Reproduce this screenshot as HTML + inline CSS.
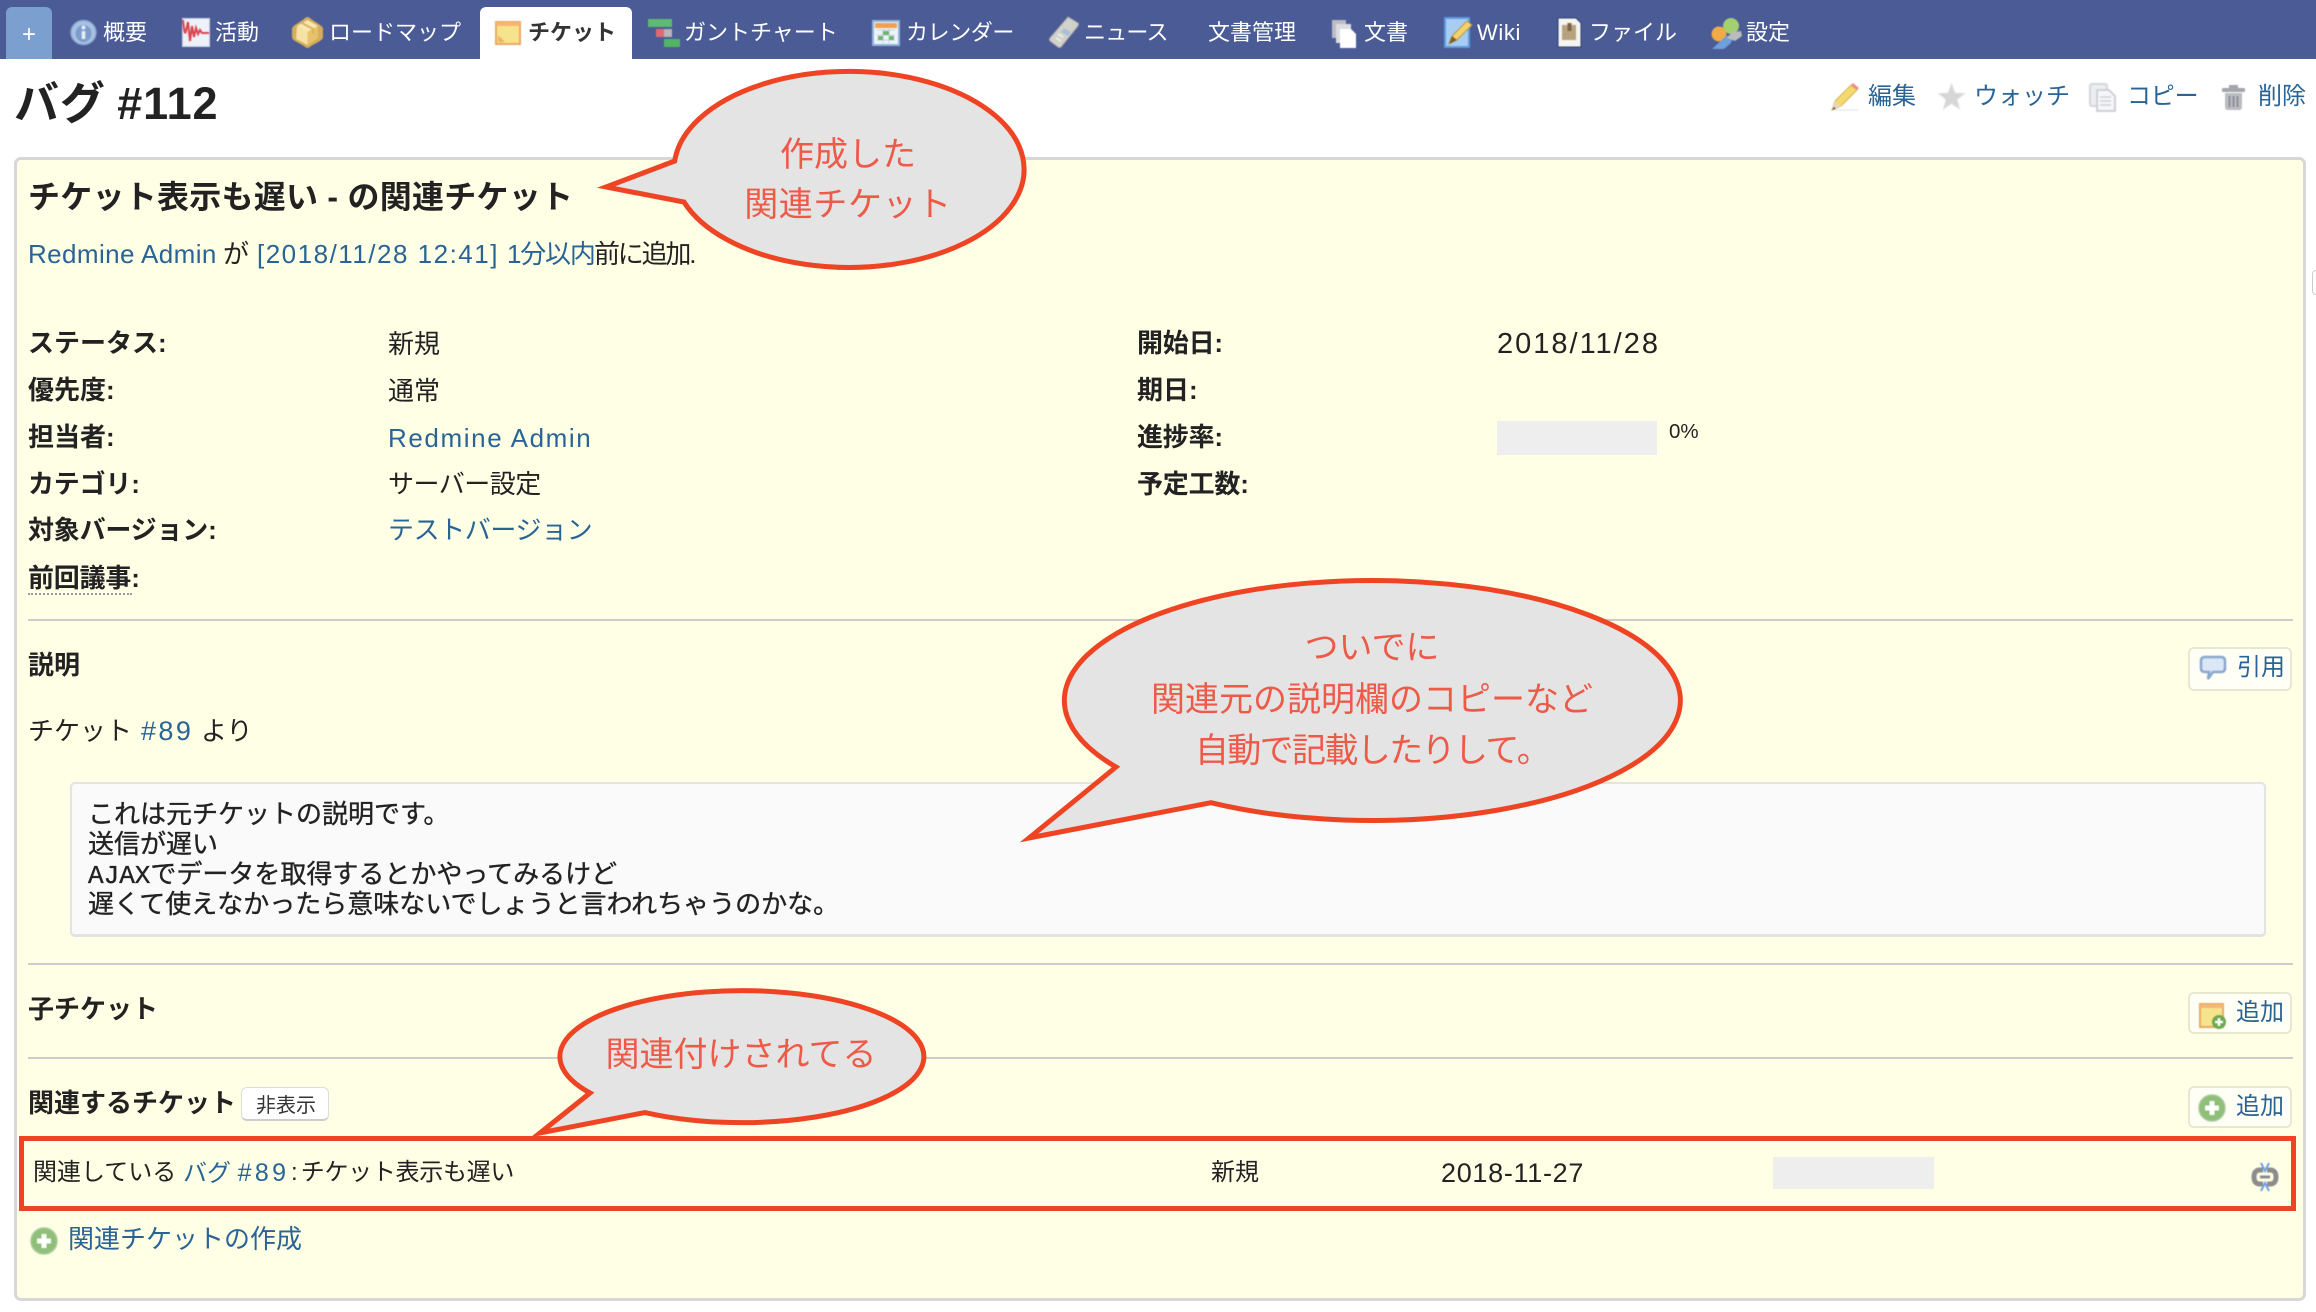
<!DOCTYPE html>
<html lang="ja">
<head>
<meta charset="utf-8">
<title>バグ #112</title>
<style>
html,body{margin:0;padding:0;background:#fff}
body{position:relative;width:2316px;height:1312px;overflow:hidden;font-family:"Liberation Sans","Noto Sans CJK JP",sans-serif;color:#222;font-size:26px}
.t{position:absolute;white-space:nowrap;line-height:40px;height:40px}
.n{font-size:22px;color:#fff;top:13px}
.b{font-weight:bold}
a,.l{color:#2a6496;text-decoration:none}
.a{font-size:24px;color:#2a6496;top:77px}
svg.i{position:absolute;overflow:visible;filter:blur(.5px)}
.hr{position:absolute;left:28px;width:2265px;height:2px;background:#ccc}
.btn{position:absolute;left:2188px;width:104px;box-sizing:border-box;border:2px solid #e8e8d0;border-radius:6px;background:#fffff6}
.m{font-family:"Liberation Mono","Noto Sans CJK JP",monospace;line-height:30px;height:30px;left:88px;color:#222;-webkit-text-stroke:.35px #222}
</style>
</head>
<body>
<!-- nav -->
<div style="position:absolute;left:0;top:0;width:2316px;height:59px;background:#4a5b96"></div>
<div style="position:absolute;left:6px;top:7px;width:46px;height:52px;background:#7b9fcf;border-radius:6px 6px 0 0"></div>
<div class="t n" style="left:22px;top:15px;font-size:24px">+</div>
<div style="position:absolute;left:480px;top:7px;width:152px;height:52px;background:#fff;border-radius:6px 6px 0 0"></div>

<svg class="i" style="left:70px;top:20px" width="27" height="25" viewBox="0 0 27 25"><ellipse cx="13.5" cy="12.500" rx="12.500" ry="12" fill="#a9c2e2" stroke="#8ba7cf" stroke-width="1.500"/><ellipse cx="13.500" cy="13.500" rx="8" ry="8.500" fill="#7c9dca"/><rect x="11.700" y="11" width="3.600" height="8" fill="#e8eef8"/><circle cx="13.500" cy="7.500" r="2" fill="#e8eef8"/></svg>
<div class="t n" style="left:103px">概要</div>
<svg class="i" style="left:182px;top:18px" width="28" height="29" viewBox="0 0 28 29"><rect x="0.500" y="0.500" width="27" height="28" fill="#eef1f7" stroke="#c9d2e4"/><path d="M1 2C2 12 3 18 4 13L6 4L8 23L10 8L12 19L14 10L16 16L18 12L20 15H27" fill="none" stroke="#dc4550" stroke-width="2"/></svg>
<div class="t n" style="left:215px">活動</div>
<svg class="i" style="left:292px;top:17px" width="31" height="31" viewBox="0 0 31 31"><path d="M15.500 0Q17 0 19 2L28 8Q31 10 31 12V20Q31 22 28 24L19 29Q17 31 15.500 31Q14 31 12 29L3 24Q0 22 0 20V12Q0 10 3 8L12 2Q14 0 15.500 0Z" fill="#d5ae5c"/><path d="M15.500 3L26 9L15.500 15L5 9Z" fill="#f8e8b4"/><path d="M5 9L15.500 15V28L4 22Z" fill="#f6e2a4"/><path d="M15.500 15L26 9V21L15.500 28Z" fill="#e8c26a"/><path d="M10 6L21 12V17" stroke="#d9b45c" stroke-width="2" fill="none"/></svg>
<div class="t n" style="left:329px">ロードマップ</div>
<svg class="i" style="left:495px;top:21px" width="26" height="24" viewBox="0 0 26 24"><rect x="1" y="1" width="24" height="22" fill="#f6e48c" stroke="#eaa763" stroke-width="2"/><rect x="1" y="1" width="24" height="4" fill="#f2b872"/><path d="M3 21L10 21L3 14Z" fill="#eeb169"/></svg>
<div class="t n b" style="left:528px;color:#333">チケット</div>
<svg class="i" style="left:648px;top:19px" width="32" height="28" viewBox="0 0 32 28"><rect x="0" y="0" width="24" height="8" fill="#5fba72"/><rect x="8" y="10" width="16" height="8" fill="#b8b4b8"/><rect x="8" y="10" width="8" height="8" fill="#e06a74"/><rect x="16" y="20" width="16" height="8" fill="#52b565"/></svg>
<div class="t n" style="left:684px">ガントチャート</div>
<svg class="i" style="left:872px;top:20px" width="28" height="26" viewBox="0 0 28 26"><rect x="1" y="1" width="26" height="24" fill="#edf3f9" stroke="#92b6dc" stroke-width="2"/><rect x="3" y="3" width="22" height="5" fill="#f0a050"/><path d="M5 10h18M5 15h18M5 20h18M11 9v14M17 9v14" stroke="#c5d5e3" stroke-width="1"/><path d="M11 11h6v4h-6zM6 16h5v4h-5zM17 16h5v4h-5z" fill="#6fb26e"/></svg>
<div class="t n" style="left:906px;letter-spacing:-.4px">カレンダー</div>
<svg class="i" style="left:1049px;top:17px" width="30" height="31" viewBox="0 0 30 31"><path d="M19 0L29 6Q30 7 29 9L12 30Q11 31 9 30L1 24Q0 22 1 21Z" fill="#d2d2cc" stroke="#a8a8a4"/><path d="M15 11L22 15L19 19L12 15Z" fill="#a8bfd8"/><path d="M7 21L12 24M9 17L14 20" stroke="#f4f4f0" stroke-width="1.500"/></svg>
<div class="t n" style="left:1084px;letter-spacing:-.8px">ニュース</div>
<div class="t n" style="left:1208px">文書管理</div>
<svg class="i" style="left:1332px;top:20px" width="24" height="28" viewBox="0 0 24 28"><rect x="0" y="0" width="14" height="18" fill="#bcbcc4"/><rect x="4" y="4" width="15" height="19" fill="#dcdce2"/><path d="M8 9H19L24 14V28H8Z" fill="#fff"/></svg>
<div class="t n" style="left:1364px">文書</div>
<svg class="i" style="left:1444px;top:17px" width="29" height="31" viewBox="0 0 29 31"><rect x="1" y="1" width="24" height="29" fill="#a9cdf2" stroke="#5c9be0" stroke-width="2"/><path d="M5 27L8 19L23 4L28 8L13 23Z" fill="#f2d36a" stroke="#b89448"/><path d="M5 27L8 19L13 23Z" fill="#7d5f32"/></svg>
<div class="t n" style="left:1477px;letter-spacing:.6px">Wiki</div>
<svg class="i" style="left:1557px;top:17px" width="25" height="31" viewBox="0 0 25 31"><path d="M1 1H19L24 6V30H1Z" fill="#f4f4f0" stroke="#35436e"/><rect x="5" y="8" width="14" height="15" fill="#b8a27e"/><rect x="10.500" y="6" width="4" height="8" fill="#7a6646"/></svg>
<div class="t n" style="left:1589px">ファイル</div>
<svg class="i" style="left:1711px;top:17px" width="31" height="32" viewBox="0 0 31 32"><circle cx="20" cy="9" r="8" fill="#a4d070"/><circle cx="8" cy="17" r="7.500" fill="#f0aa48"/><path d="M1 32L15 19L23 17L20 26L13 32Z" fill="#6f9fdc"/><path d="M16 21L25 11L24 15L30 14L31 19L24 24Z" fill="#bcbcbc"/></svg>
<div class="t n" style="left:1746px">設定</div>

<!-- title -->
<div class="t b" style="left:14px;top:79px;font-size:45px;height:50px;line-height:50px;letter-spacing:.9px">バグ <span style="margin-left:-2px">#112</span></div>

<!-- actions -->
<svg class="i" style="left:1831px;top:83px" width="28" height="28" viewBox="0 0 28 28"><path d="M1 27L4 18L20 2L26 7L10 23Z" fill="#f4d96e" stroke="#d8b24c"/><path d="M20 2L22 0L28 5L26 7Z" fill="#ee8b8b"/><path d="M1 27L4 18L10 23Z" fill="#e8d9b4"/><path d="M1 27L3 24L5 26Z" fill="#555"/><path d="M4 27H27" stroke="#eee" stroke-width="2"/></svg>
<div class="t a" style="left:1868px">編集</div>
<svg class="i" style="left:1938px;top:83px" width="27" height="27" viewBox="0 0 27 27"><path d="M13.500 1L17 10L26.500 10.500L19 16.500L21.500 26L13.500 20.500L5.500 26L8 16.500L.5 10.500L10 10Z" fill="#d6d6d6" stroke="#e2e2e2"/></svg>
<div class="t a" style="left:1974px">ウォッチ</div>
<svg class="i" style="left:2089px;top:83px" width="27" height="29" viewBox="0 0 27 29"><rect x="1" y="1" width="17" height="22" rx="2" fill="#eceef0" stroke="#d4d6da" stroke-width="2"/><path d="M8 7H20L26 13V28H8Z" fill="#f6f6f8" stroke="#cfd1d6" stroke-width="2"/><path d="M11 14H22M11 18H22M11 22H22" stroke="#cfd1d6" stroke-width="1.500"/></svg>
<div class="t a" style="left:2127px;letter-spacing:-.2px">コピー</div>
<svg class="i" style="left:2222px;top:85px" width="23" height="25" viewBox="0 0 23 25"><rect x="0" y="3" width="23" height="4" rx="1" fill="#a4a4ac"/><rect x="7" y="0" width="9" height="3" fill="#a4a4ac"/><path d="M3 8H20V22Q20 25 17 25H6Q3 25 3 22Z" fill="#bcbcc2"/><path d="M7.500 11V22M11.500 11V22M15.500 11V22" stroke="#90909a" stroke-width="2"/></svg>
<div class="t a" style="left:2258px">削除</div>

<!-- main box -->
<div style="position:absolute;left:14px;top:157px;width:2292px;height:1144px;box-sizing:border-box;border:3px solid #d7d7d7;border-radius:7px;background:#ffffe6"></div>
<div style="position:absolute;left:2312px;top:270px;width:8px;height:25px;box-sizing:border-box;border:1px solid #ccc;border-radius:4px"></div>

<div class="t b" style="left:28px;top:177px;font-size:32px;letter-spacing:.25px">チケット表示も遅い - の関連チケット</div>
<div class="t l" style="left:28px;top:234px;letter-spacing:.4px">Redmine Admin</div>
<div class="t" style="left:223px;top:234px">が</div>
<div class="t l" style="left:257px;top:234px;letter-spacing:1.5px">[2018/11/28 12:41]</div>
<div class="t l" style="left:507px;top:234px;letter-spacing:-1.2px">1分以内</div>
<div class="t" style="left:594px;top:234px;letter-spacing:-2.2px">前に追加.</div>

<!-- attributes -->
<div class="t b" style="left:28px;top:323px">ステータス:</div>
<div class="t" style="left:388px;top:324px">新規</div>
<div class="t b" style="left:28px;top:370px">優先度:</div>
<div class="t" style="left:388px;top:371px">通常</div>
<div class="t b" style="left:28px;top:417px">担当者:</div>
<div class="t l" style="left:388px;top:418px;letter-spacing:1.6px">Redmine Admin</div>
<div class="t b" style="left:28px;top:464px;letter-spacing:-.2px">カテゴリ:</div>
<div class="t" style="left:388px;top:464px;letter-spacing:-.5px">サーバー設定</div>
<div class="t b" style="left:28px;top:510px;letter-spacing:-.2px">対象バージョン:</div>
<div class="t l" style="left:388px;top:510px;letter-spacing:-.4px">テストバージョン</div>
<div class="t b" style="left:28px;top:558px;letter-spacing:-.2px">前回議事:</div>
<div style="position:absolute;left:28px;top:593px;width:104px;border-top:2px dotted #999"></div>

<div class="t b" style="left:1137px;top:323px;letter-spacing:-.2px">開始日:</div>
<div class="t" style="left:1497px;top:324px;font-size:29px;letter-spacing:2px">2018/11/28</div>
<div class="t b" style="left:1137px;top:370px">期日:</div>
<div class="t b" style="left:1137px;top:417px;letter-spacing:-.2px">進捗率:</div>
<div style="position:absolute;left:1497px;top:421px;width:160px;height:34px;background:#eee"></div>
<div class="t" style="left:1669px;top:412px;font-size:20.5px">0%</div>
<div class="t b" style="left:1137px;top:464px;letter-spacing:-.2px">予定工数:</div>

<div class="hr" style="top:619px"></div>

<div class="t b" style="left:28px;top:645px">説明</div>
<div class="btn" style="top:647px;height:44px"></div>
<svg class="i" style="left:2200px;top:656px" width="26" height="24" viewBox="0 0 26 24"><path d="M5 1H21Q25 1 25 5V12Q25 16 21 16H13L8 23L9 16H5Q1 16 1 12V5Q1 1 5 1Z" fill="#dbe6f6" stroke="#8aa8cc" stroke-width="2.500"/></svg>
<div class="t a" style="left:2237px;top:648px">引用</div>
<div class="t" style="left:28px;top:711px">チケット</div>
<div class="t l" style="left:141px;top:711px;font-size:27px;letter-spacing:2.400px">#89</div>
<div class="t" style="left:201px;top:711px">より</div>

<div style="position:absolute;left:70px;top:782px;width:2196px;height:155px;box-sizing:border-box;border:2px solid #e3e3e3;border-bottom-width:3px;border-radius:5px;background:#fafafa"></div>
<div class="t m" style="top:801px">これは元チケットの説明です。</div>
<div class="t m" style="top:831px">送信が遅い</div>
<div class="t m" style="top:861px">AJAXでデータを取得するとかやってみるけど</div>
<div class="t m" style="top:891px">遅くて使えなかったら意味ないでしょうと言われちゃうのかな。</div>

<div class="hr" style="top:963px"></div>
<div class="t b" style="left:28px;top:989px">子チケット</div>
<div class="btn" style="top:992px;height:42px"></div>
<svg class="i" style="left:2199px;top:1003px" width="28" height="26" viewBox="0 0 28 26"><rect x="1" y="1" width="23" height="23" fill="#f6e48c" stroke="#eaa763" stroke-width="2"/><rect x="1" y="1" width="23" height="4" fill="#f2b872"/><circle cx="20" cy="19" r="7" fill="#6fa84f"/><path d="M20 15V23M16 19H24" stroke="#fff" stroke-width="2.500"/></svg>
<div class="t a" style="left:2236px;top:993px">追加</div>

<div class="hr" style="top:1057px"></div>
<div class="t b" style="left:28px;top:1083px">関連するチケット</div>
<div style="position:absolute;left:241px;top:1087px;width:88px;height:34px;box-sizing:border-box;border:1px solid #ddd;border-bottom:2px solid #ccc;border-radius:6px;background:#fff"></div>
<div class="t" style="left:256px;top:1086px;font-size:20px;color:#333">非表示</div>
<div class="btn" style="top:1086px;height:42px"></div>
<svg class="i" style="left:2198px;top:1094px" width="28" height="28" viewBox="0 0 28 28"><circle cx="14" cy="14" r="13" fill="#8fbf78" stroke="#a9c99a" stroke-width="1.500"/><path d="M14 7V21M7 14H21" stroke="#fff" stroke-width="5"/></svg>
<div class="t a" style="left:2236px;top:1087px">追加</div>

<div class="t" style="left:33px;top:1153px;font-size:24px">関連している</div>
<div class="t l" style="left:183px;top:1153px;font-size:24px">バグ <span style="letter-spacing:3.300px;font-size:25px">#89</span></div>
<div class="t" style="left:291px;top:1153px;font-size:24px;letter-spacing:-.3px">: <span style="margin-left:-3px">チケット表示も遅い</span></div>
<div class="t" style="left:1211px;top:1153px;font-size:24px">新規</div>
<div class="t" style="left:1441px;top:1153px;font-size:27px;letter-spacing:.7px">2018-11-27</div>
<div style="position:absolute;left:1773px;top:1157px;width:161px;height:32px;background:#eee"></div>
<svg class="i" style="left:2252px;top:1162px" width="26" height="30" viewBox="0 0 26 30"><path d="M11 8H8Q2 8 2 15T8 22H11M15 8H18Q24 8 24 15T18 22H15" fill="none" stroke="#8c8c8c" stroke-width="5"/><path d="M8 15H18" stroke="#8c8c8c" stroke-width="3"/><path d="M9 1L13 9L17 1M9 29L13 21L17 29" fill="none" stroke="#6f9fe8" stroke-width="2"/></svg>

<svg class="i" style="left:30px;top:1227px" width="28" height="28" viewBox="0 0 28 28"><circle cx="14" cy="14" r="13" fill="#8fbf78" stroke="#a9c99a" stroke-width="1.500"/><path d="M14 7V21M7 14H21" stroke="#fff" stroke-width="5"/></svg>
<div class="t l" style="left:68px;top:1219px">関連チケットの作成</div>

<!-- annotations -->
<svg style="position:absolute;left:0;top:0" width="2316" height="1312" viewBox="0 0 2316 1312">
  <rect x="21.500" y="1138.500" width="2272" height="70" fill="none" stroke="#ee4423" stroke-width="5"/>
  <g fill="#e4e4e4" stroke="#ee4423" stroke-width="5" stroke-miterlimit="10">
    <path d="M674.700 161L606 187L684 202A175 98 0 1 0 674.700 161Z"/>
    <path d="M1116 767L1029 838L1211 802.700A308 120 0 1 0 1116 767Z"/>
    <path d="M590 1093L540 1133L645 1112.500A182 66 0 1 0 590 1093Z"/>
  </g>
  <g fill="#ee5a48" font-family="'Liberation Sans','Noto Sans CJK JP',sans-serif" font-size="34" text-anchor="middle">
    <text x="848" y="166">作成した</text>
    <text x="848" y="216" letter-spacing=".6">関連チケット</text>
    <text x="1372" y="659">ついでに</text>
    <text x="1372" y="711">関連元の説明欄のコピーなど</text>
    <text x="1372" y="762" letter-spacing="-1.600">自動で記載したりして。</text>
    <text x="741" y="1066">関連付けされてる</text>
  </g>
</svg>
</body>
</html>
